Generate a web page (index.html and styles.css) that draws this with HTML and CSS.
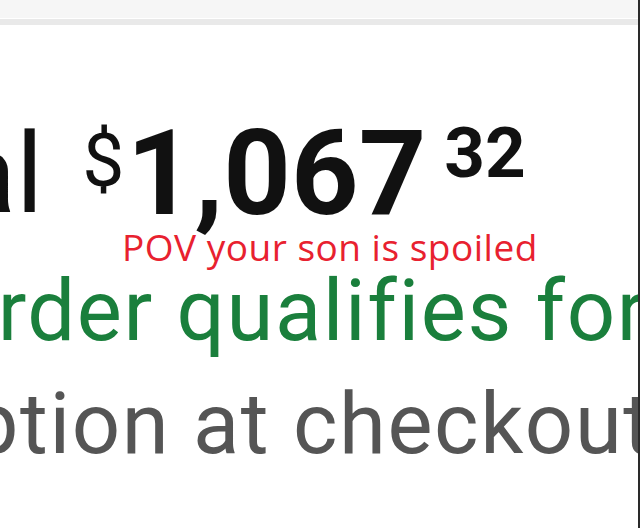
FILE: index.html
```html
<!DOCTYPE html>
<html>
<head>
<meta charset="utf-8">
<link rel="stylesheet" href="styles.css">
</head>
<body>
<div class="screen">
  <div class="topbar"></div>
  <div class="band"></div>
  <main class="content">
    <div class="subtotal">
      <span class="label">Subtotal</span>
      <span class="price">
        <span class="cur">$</span><span class="whole">1,067</span><span class="frac">32</span>
      </span>
    </div>
    <p class="free">Your order qualifies for FREE Shipping</p>
    <p class="choose">Choose this option at checkout.</p>
    <div class="caption">POV your son is spoiled</div>
  </main>
</div>
</body>
</html>
```
FILE: styles.css
```css
html, body {
  margin: 0;
  padding: 0;
  background: #ffffff;
  overflow: hidden;
}
.screen {
  width: 640px;
  height: 528px;
  display: flex;
  flex-direction: column;
  box-sizing: border-box;
  border-right: 2px solid #2a2a2a;
  overflow: hidden;
  position: relative;
}
.topbar {
  height: 18px;
  background: #f6f6f6;
  flex: none;
}
.band {
  height: 6px;
  margin-top: 1px;
  background: #e9e9e9;
  flex: none;
}
.content {
  position: relative;
  flex: 1;
  font-family: "Roboto", "Noto Sans", sans-serif;
  white-space: nowrap;
}
.subtotal {
  display: flex;
  align-items: flex-start;
  margin-top: 89px;
  margin-left: -372px;
  gap: 39px;
}
.label {
  flex: none;
  font-size: 112px;
  line-height: 120px;
  color: #111;
}
.price {
  flex: none;
  display: flex;
  align-items: flex-start;
  color: #111;
}
.cur {
  font-size: 75px;
  line-height: 75px;
  margin-top: 9px;
  margin-right: 2px;
}
.whole {
  font-size: 118px;
  line-height: 120px;
  font-weight: 700;
}
.frac {
  font-size: 71px;
  line-height: 71px;
  font-weight: 700;
  margin-left: 18px;
  margin-top: 3px;
}
.free {
  margin: 29px 0 0 -254px;
  font-size: 85px;
  line-height: 96px;
  letter-spacing: 1.6px;
  color: #1a7f3c;
}
.choose {
  margin: 17px 0 0 -568px;
  font-size: 85px;
  line-height: 96px;
  letter-spacing: 1.6px;
  color: #555555;
}
.caption {
  position: absolute;
  top: 196px;
  left: 122px;
  font-family: "Open Sans", sans-serif;
  font-size: 37px;
  letter-spacing: 0.5px;
  color: #e8212f;
}
```
